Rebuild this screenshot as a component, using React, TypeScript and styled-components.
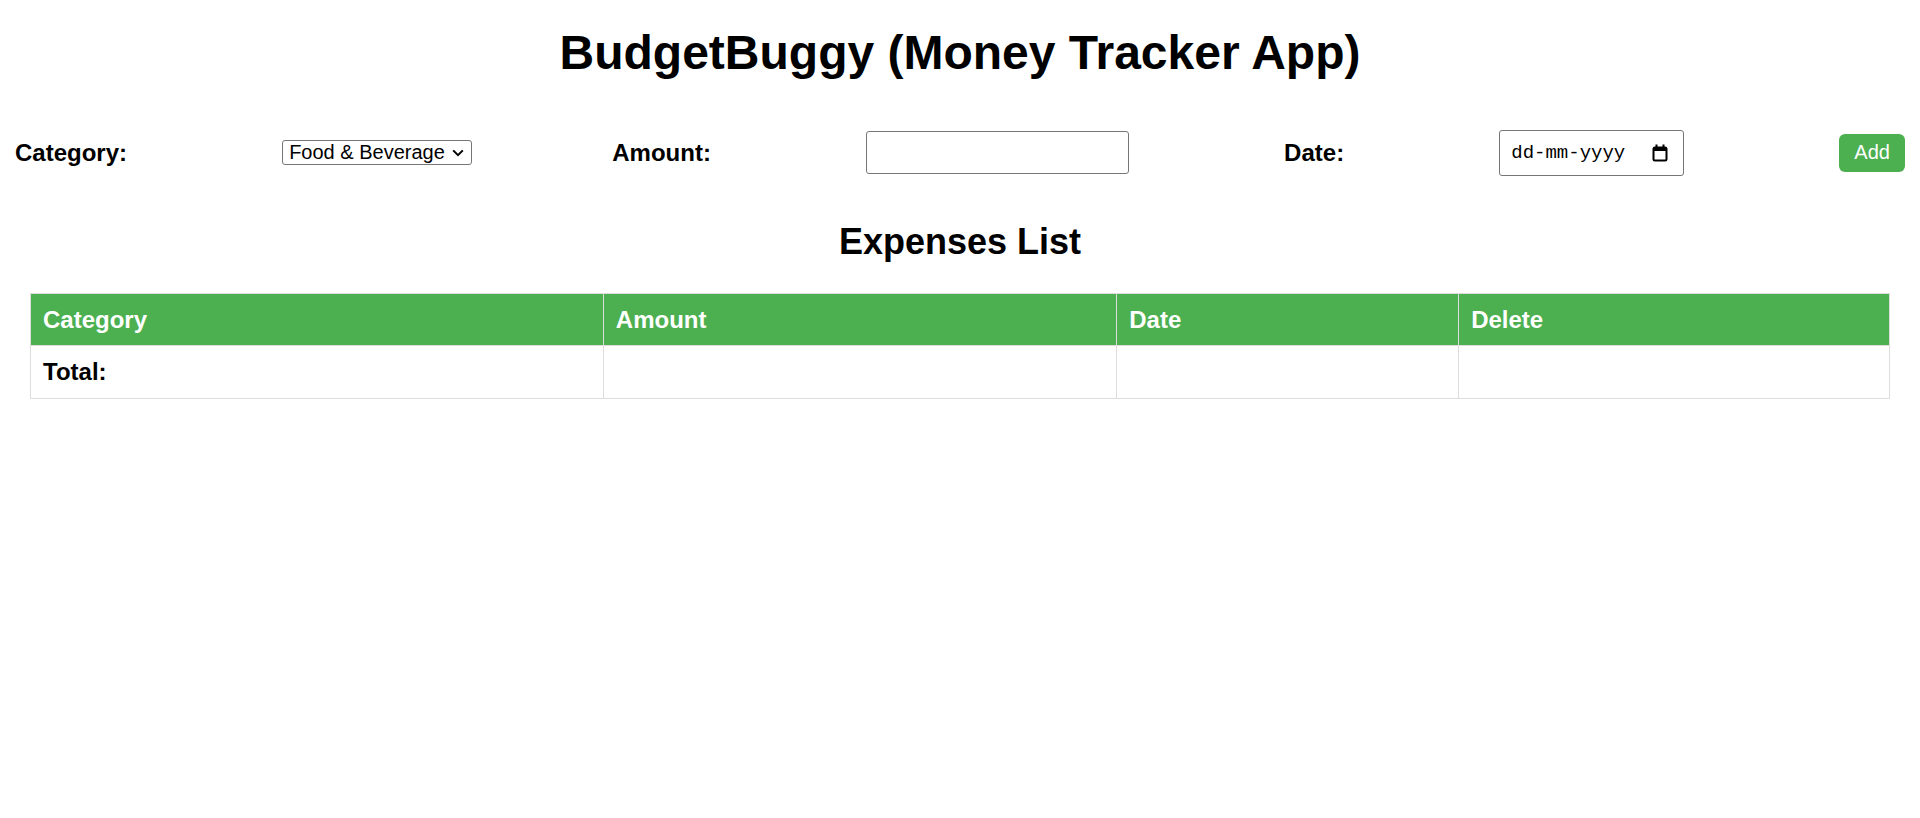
import React from "react";
import styled, { createGlobalStyle } from "styled-components";

const GlobalStyle = createGlobalStyle`
  html, body {
    margin: 0;
    padding: 0;
    background: #ffffff;
  }
  body {
    font-family: "Liberation Sans", Arial, sans-serif;
    color: #000000;
  }
`;

const Page = styled.div`
  padding: 0 15px;
`;

const Title = styled.h1`
  margin: 0;
  padding-top: 25px;
  font-size: 48px;
  line-height: 56px;
  font-weight: 700;
  text-align: center;
`;

const Form = styled.form`
  display: flex;
  justify-content: space-between;
  align-items: center;
  margin-top: 48.5px;
  height: 46px;
`;

const Label = styled.label`
  font-size: 24px;
  font-weight: 700;
  line-height: 28px;
`;

const SelectWrap = styled.div`
  position: relative;
  display: flex;
  margin-right: -15px;
`;

const Select = styled.select`
  box-sizing: border-box;
  width: 190px;
  height: 25px;
  appearance: none;
  -webkit-appearance: none;
  font-family: "Liberation Sans", Arial, sans-serif;
  font-size: 20px;
  line-height: 23px;
  color: #000;
  background: #fff;
  border: 1px solid #767676;
  border-radius: 3px;
  padding: 0 26px 0 6px;
`;

const Chevron = styled.svg`
  position: absolute;
  right: 8px;
  top: 9px;
  width: 12px;
  height: 8px;
  pointer-events: none;
`;

const TextInput = styled.input`
  box-sizing: border-box;
  width: 263px;
  height: 43px;
  font-family: "Liberation Sans", Arial, sans-serif;
  font-size: 20px;
  border: 1px solid #767676;
  border-radius: 3px;
  padding: 0 6px;
  background: #fff;
`;

const DateField = styled.div`
  box-sizing: border-box;
  width: 185px;
  height: 46px;
  display: flex;
  align-items: center;
  justify-content: space-between;
  padding: 0 15px 0 11px;
  border: 1px solid #767676;
  border-radius: 3px;
  background: #fff;
`;

const DateText = styled.span`
  font-family: "Liberation Mono", "DejaVu Sans Mono", monospace;
  font-size: 19px;
  color: #000;
`;

const CalendarIcon = styled.svg`
  width: 16px;
  height: 18px;
  display: block;
`;

const AddButton = styled.button`
  font-family: "Liberation Sans", Arial, sans-serif;
  font-size: 20px;
  line-height: 23px;
  color: #ffffff;
  background: #4caf50;
  border: none;
  border-radius: 6px;
  padding: 7.5px 15px;
  cursor: pointer;
`;

const SectionTitle = styled.h2`
  margin: 45px 0 0;
  font-size: 36px;
  line-height: 41px;
  font-weight: 700;
  text-align: center;
`;

const Table = styled.table`
  width: calc(100% - 30px);
  margin: 31px 15px 0;
  border-collapse: collapse;
`;

const HeadCell = styled.th`
  background: #4caf50;
  color: #ffffff;
  font-size: 24px;
  line-height: 27.5px;
  font-weight: 700;
  text-align: left;
  padding: 12px;
  border: 1px solid #dddddd;
`;

const Cell = styled.td<{ $bold?: boolean }>`
  font-size: 24px;
  line-height: 27.5px;
  font-weight: ${(p) => (p.$bold ? 700 : 400)};
  text-align: left;
  padding: 12px;
  border: 1px solid #dddddd;
`;

const Calendar = () => (
  <CalendarIcon viewBox="0 0 16 18" aria-hidden="true">
    <rect x="1.5" y="3.5" width="13" height="13" rx="1.5" fill="none" stroke="#000" strokeWidth="2" />
    <rect x="1.5" y="3.5" width="13" height="3.5" fill="#000" />
    <rect x="3.5" y="0.5" width="2" height="3.5" fill="#000" />
    <rect x="10.5" y="0.5" width="2" height="3.5" fill="#000" />
  </CalendarIcon>
);

export default function App() {
  return (
    <>
      <GlobalStyle />
      <Page>
        <Title>BudgetBuggy (Money Tracker App)</Title>
        <Form onSubmit={(e) => e.preventDefault()}>
          <Label htmlFor="category">Category:</Label>
          <SelectWrap>
            <Select id="category" defaultValue="Food & Beverage">
              <option>Food &amp; Beverage</option>
              <option>Rent</option>
              <option>Transportation</option>
              <option>Relaxing</option>
            </Select>
            <Chevron viewBox="0 0 12 8" aria-hidden="true">
              <path d="M1.2 1.4 L6 6.2 L10.8 1.4" fill="none" stroke="#000" strokeWidth="2" />
            </Chevron>
          </SelectWrap>
          <Label htmlFor="amount">Amount:</Label>
          <TextInput id="amount" type="number" />
          <Label htmlFor="date">Date:</Label>
          <DateField id="date">
            <DateText>dd-mm-yyyy</DateText>
            <Calendar />
          </DateField>
          <AddButton type="submit">Add</AddButton>
        </Form>
        <SectionTitle>Expenses List</SectionTitle>
        <Table>
          <thead>
            <tr>
              <HeadCell>Category</HeadCell>
              <HeadCell>Amount</HeadCell>
              <HeadCell>Date</HeadCell>
              <HeadCell>Delete</HeadCell>
            </tr>
          </thead>
          <tbody>
            <tr>
              <Cell $bold>Total:</Cell>
              <Cell></Cell>
              <Cell></Cell>
              <Cell></Cell>
            </tr>
          </tbody>
        </Table>
      </Page>
    </>
  );
}
